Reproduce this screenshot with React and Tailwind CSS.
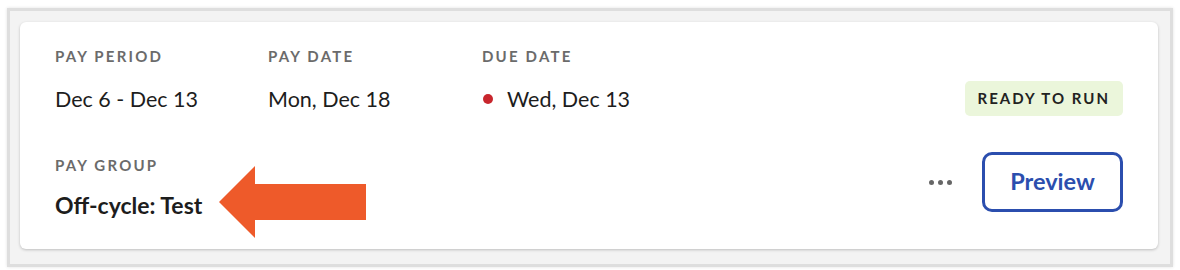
export default function App() {
  const font = { fontFamily: "Lato, 'Noto Sans', sans-serif" };
  return (
    <div className="w-[1180px] h-[270px] bg-white pt-[8px] pl-[7px]" style={font}>
      <div className="w-[1166px] h-[259px] border-[3px] border-[#dedede] bg-[#f3f3f3] pt-[11px] pl-[10px] shadow-[0_0_3px_rgba(0,0,0,0.12)]">
        <div className="w-[1138px] h-[227px] bg-white rounded-[6px] shadow-[0_1px_3px_rgba(0,0,0,0.22)] pt-[25px] pl-[35px] pr-[35px] flex flex-col">
          {/* Row 1 */}
          <div className="flex items-start">
            <div className="w-[213px] flex flex-col">
              <div className="text-[15px] leading-[18px] font-bold tracking-[2.2px] text-[#6b6b6b]">PAY PERIOD</div>
              <div className="mt-[21px] text-[21.5px] leading-[26px] text-[#1d1d1d]">Dec 6 - Dec 13</div>
            </div>
            <div className="w-[214px] flex flex-col">
              <div className="text-[15px] leading-[18px] font-bold tracking-[2.2px] text-[#6b6b6b]">PAY DATE</div>
              <div className="mt-[21px] text-[21.5px] leading-[26px] text-[#1d1d1d]">Mon, Dec 18</div>
            </div>
            <div className="flex flex-col">
              <div className="text-[15px] leading-[18px] font-bold tracking-[2.2px] text-[#6b6b6b]">DUE DATE</div>
              <div className="mt-[21px] flex items-center">
                <span className="w-[10px] h-[10px] rounded-full bg-[#c8262d] ml-[1px] mr-[14px]"></span>
                <span className="text-[21.5px] leading-[26px] text-[#1d1d1d]">Wed, Dec 13</span>
              </div>
            </div>
            <div className="ml-auto mt-[34px] h-[35px] px-[13px] flex items-center rounded-[5px] bg-[#ebf6db] text-[15px] font-bold tracking-[2px] text-[#222222]">
              READY TO RUN
            </div>
          </div>
          {/* Row 2 */}
          <div className="flex items-start mt-[40px]">
            <div className="flex flex-col">
              <div className="text-[15px] leading-[18px] font-bold tracking-[2.2px] text-[#6b6b6b]">PAY GROUP</div>
              <div className="mt-[18px] text-[23px] leading-[26px] font-bold text-[#1d1d1d]">Off-cycle: Test</div>
            </div>
            <svg className="ml-[17px] mt-[10px]" width="147" height="72" viewBox="0 0 147 72">
              <polygon points="0,36 36,0 36,18 147,18 147,54 36,54 36,72" fill="#ee5a2a" />
            </svg>
            <div className="ml-auto -mt-[4px] flex items-center">
              <div className="flex gap-[4px] mr-[30px]">
                <span className="w-[5px] h-[5px] rounded-full bg-[#666666]"></span>
                <span className="w-[5px] h-[5px] rounded-full bg-[#666666]"></span>
                <span className="w-[5px] h-[5px] rounded-full bg-[#666666]"></span>
              </div>
              <button className="w-[141px] h-[60px] rounded-[10px] border-[3px] border-[#2b4eae] bg-white text-[23.5px] font-bold text-[#2b4eae] flex items-center justify-center">
                Preview
              </button>
            </div>
          </div>
        </div>
      </div>
    </div>
  );
}
